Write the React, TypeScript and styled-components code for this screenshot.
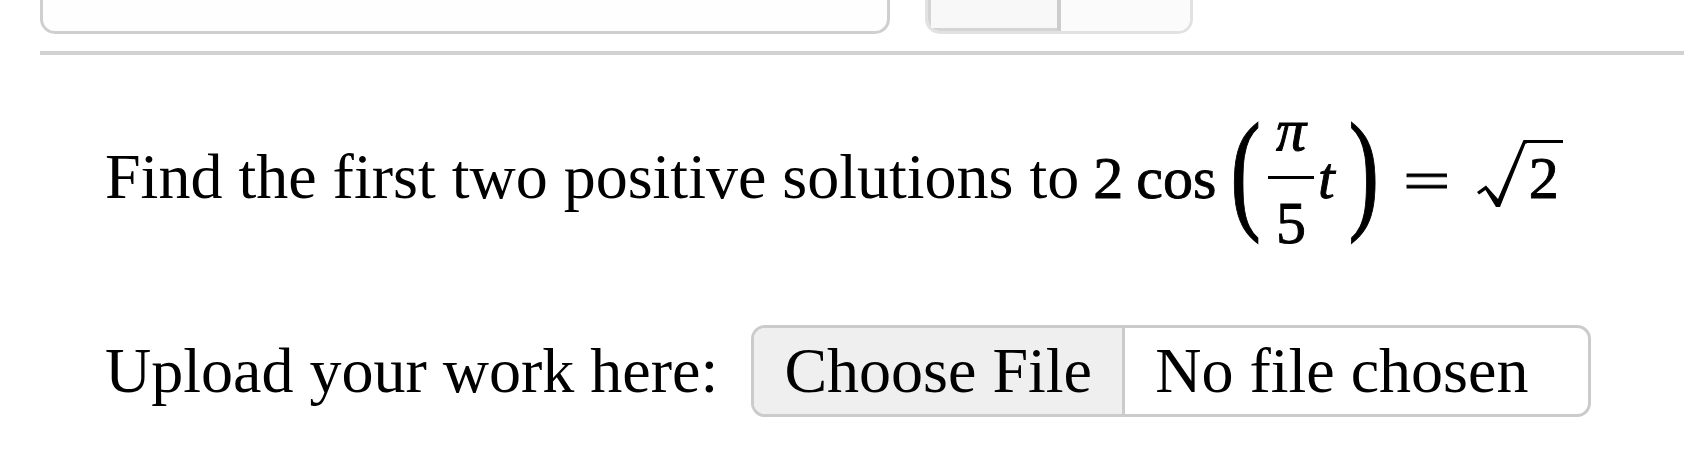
import styled, { createGlobalStyle } from "styled-components";

const GlobalStyle = createGlobalStyle`
  html, body {
    margin: 0;
    padding: 0;
    background: #ffffff;
  }
  body {
    font-family: "Liberation Serif", "Times New Roman", serif;
    color: #000000;
    overflow: hidden;
  }
`;

const Page = styled.div`
  width: 1684px;
  height: 476px;
`;

const TopRow = styled.div`
  display: flex;
  gap: 35px;
  padding-left: 40px;
  height: 34px;
`;

const TextBox = styled.div`
  box-sizing: border-box;
  width: 850px;
  height: 34px;
  border: 3px solid #cfcfcf;
  border-top: none;
  border-radius: 0 0 15px 15px;
  background: #fefefe;
`;

const SegmentGroup = styled.div`
  box-sizing: border-box;
  display: flex;
  width: 268px;
  height: 34px;
  border: 3px solid #e2e2e2;
  border-top: none;
  border-radius: 0 0 15px 15px;
  overflow: hidden;
`;

const Segment = styled.div<{ $active?: boolean }>`
  flex: 1;
  background: ${(p) => (p.$active ? "#f8f8f8" : "#fbfbfb")};
  border-right: ${(p) => (p.$active ? "4px solid #cdcdcd" : "none")};
  box-shadow: ${(p) => (p.$active ? "inset 3px -3px 0 #d4d4d4" : "none")};
`;

const Rule = styled.div`
  margin: 17px 0 0 40px;
  height: 4px;
  background: #d2d2d2;
`;

const Content = styled.div`
  padding-left: 105px;
`;

const Question = styled.div`
  margin-top: 46px;
  font-size: 64px;
  white-space: nowrap;
`;

/* KaTeX-like inline formula */
const MathRow = styled.span`
  font-size: 60px;
  margin-left: 14px;
  -webkit-text-stroke: 0.9px #000;
`;

const Op = styled.span`
  margin-left: 13px;
`;

const Paren = styled.span<{ $side: "left" | "right" }>`
  display: inline-block;
  font-size: 92px;
  line-height: 92px;
  -webkit-text-stroke: 0.8px #000;
  transform: translateY(3px) scaleY(1.46);
  margin-left: ${(p) => (p.$side === "left" ? "14px" : "14px")};
`;

const Frac = styled.span`
  display: inline-flex;
  flex-direction: column;
  align-items: center;
  vertical-align: 48px;
  margin-left: 7px;
`;

const Num = styled.span`
  padding: 0 8px 17px;
  line-height: 58px;
  font-style: italic;
  font-size: 60px;
  -webkit-text-stroke: 1px #000;
`;

const Bar = styled.span`
  align-self: stretch;
  height: 3px;
  background: #000;
`;

const Den = styled.span`
  padding: 15px 8px 0;
  line-height: 58px;
`;

const Var = styled.span`
  font-style: italic;
  margin-left: 4px;
`;

const Equals = styled.span`
  display: inline-block;
  font-size: 56px;
  -webkit-text-stroke: 0.9px #000;
  transform: translateY(2px) scaleX(1.5);
  margin: 0 34px 0 32px;
`;

const Sqrt = styled.span`
  display: inline-flex;
  align-items: flex-start;
`;

const Radicand = styled.span`
  align-self: baseline;
  border-top: 3px solid #000;
  line-height: 58px;
  padding: 6px 4px 0 2px;
`;

const UploadRow = styled.div`
  display: flex;
  align-items: center;
  gap: 33px;
  margin-top: 73px;
  font-size: 64px;
  white-space: nowrap;
`;

const FilePicker = styled.label`
  box-sizing: border-box;
  display: flex;
  width: 840px;
  height: 92px;
  border: 3px solid #cbcbcb;
  border-radius: 14px;
  overflow: hidden;
  background: #ffffff;
`;

const ChooseButton = styled.span`
  box-sizing: border-box;
  display: flex;
  align-items: center;
  justify-content: center;
  width: 371px;
  background: #efefef;
  border-right: 3px solid #cbcbcb;
`;

const FileName = styled.span`
  display: flex;
  align-items: center;
  padding-left: 30px;
`;

function Surd() {
  return (
    <svg width="50" height="68" viewBox="0 0 50 68">
      <polygon
        points="0,52 9,45.5 21,59 46.5,0 50,0 50,3.5 48.5,3.5 23,67 19,67 8.5,50 2,54.5"
        fill="#000"
      />
    </svg>
  );
}

export default function App() {
  return (
    <Page>
      <GlobalStyle />
      <TopRow>
        <TextBox />
        <SegmentGroup>
          <Segment $active />
          <Segment />
        </SegmentGroup>
      </TopRow>
      <Rule />
      <Content>
        <Question>
          Find the first two positive solutions to
          <MathRow>
            2<Op>cos</Op>
            <Paren $side="left">(</Paren>
            <Frac>
              <Num>π</Num>
              <Bar />
              <Den>5</Den>
            </Frac>
            <Var>t</Var>
            <Paren $side="right">)</Paren>
            <Equals>=</Equals>
            <Sqrt>
              <Surd />
              <Radicand>2</Radicand>
            </Sqrt>
          </MathRow>
        </Question>
        <UploadRow>
          <span>Upload your work here:</span>
          <FilePicker>
            <ChooseButton>Choose File</ChooseButton>
            <FileName>No file chosen</FileName>
          </FilePicker>
        </UploadRow>
      </Content>
    </Page>
  );
}
